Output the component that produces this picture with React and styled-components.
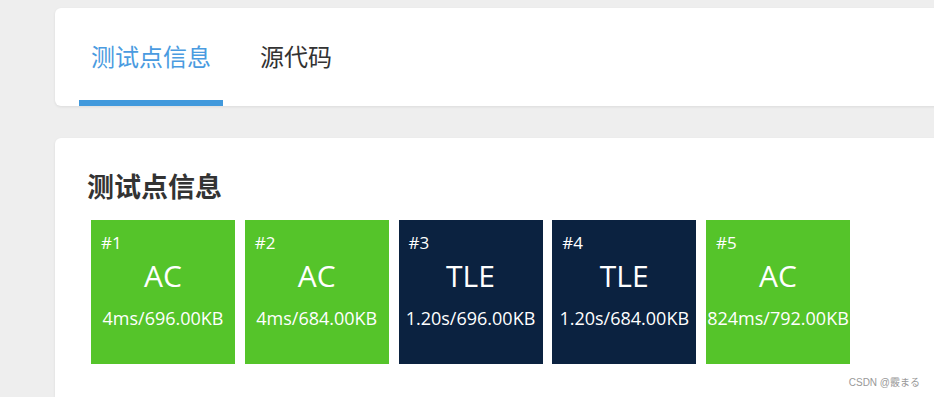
import styled, { createGlobalStyle } from "styled-components";

const GlobalStyle = createGlobalStyle`
  html, body {
    margin: 0;
    padding: 0;
    background: #eeeeee;
    overflow: hidden;
  }
  body {
    font-family: "Open Sans", "Noto Sans CJK SC", sans-serif;
  }
`;

const Page = styled.div`
  width: 934px;
  height: 397px;
  padding: 8px 0 0 55px;
  box-sizing: border-box;
  display: flex;
  flex-direction: column;
  gap: 32px;
  position: relative;
  overflow: hidden;
`;

const Card = styled.div`
  width: 900px;
  flex-shrink: 0;
  background: #ffffff;
  border-radius: 6px 0 0 6px;
  box-shadow: 0 1px 3px rgba(0, 0, 0, 0.08);
`;

const TabBar = styled.div`
  display: flex;
  padding-left: 24px;
  height: 98px;
  gap: 25px;
`;

const Tab = styled.button`
  background: none;
  border: none;
  padding: 0 12px;
  height: 98px;
  box-sizing: border-box;
  font-family: "Noto Sans CJK SC", sans-serif;
  font-size: 24px;
  color: ${(p) => (p.$active ? "#4a9be0" : "#333333")};
  border-bottom: 6px solid ${(p) => (p.$active ? "#4199dc" : "transparent")};
  padding-top: 2px;
  display: flex;
  align-items: center;
`;

const Section = styled(Card)`
  flex: 1;
  border-radius: 6px 0 0 0;
  padding: 30px 0 0 32px;
  box-sizing: border-box;
`;

const Heading = styled.h2`
  margin: 0 0 16px;
  font-family: "Noto Sans CJK SC", sans-serif;
  font-size: 27px;
  font-weight: 700;
  line-height: 36px;
  color: #333333;
`;

const Cases = styled.div`
  display: flex;
  gap: 9.75px;
  padding-left: 4px;
`;

const CaseBox = styled.div`
  width: 144px;
  height: 144px;
  background: ${(p) => (p.$status === "AC" ? "#55c42a" : "#0b2240")};
  color: #ffffff;
  display: flex;
  flex-direction: column;
  align-items: center;
  padding-top: 12px;
  box-sizing: border-box;
`;

const CaseId = styled.div`
  align-self: flex-start;
  padding-left: 10px;
  font-size: 17px;
  line-height: 22px;
`;

const Verdict = styled.div`
  font-size: 30px;
  line-height: 40px;
  margin-top: 2px;
`;

const Usage = styled.div`
  font-size: 18px;
  line-height: 24px;
  margin-top: 10px;
  white-space: nowrap;
`;

const Watermark = styled.div`
  position: absolute;
  right: 14px;
  bottom: 8px;
  font-family: "Liberation Sans", "Noto Sans CJK JP", sans-serif;
  font-size: 10px;
  color: #999999;
`;

const cases = [
  { id: 1, status: "AC", usage: "4ms/696.00KB" },
  { id: 2, status: "AC", usage: "4ms/684.00KB" },
  { id: 3, status: "TLE", usage: "1.20s/696.00KB" },
  { id: 4, status: "TLE", usage: "1.20s/684.00KB" },
  { id: 5, status: "AC", usage: "824ms/792.00KB" },
];

const App = () => {
  return (
    <>
      <GlobalStyle />
      <Page>
        <Card>
          <TabBar>
            <Tab $active>测试点信息</Tab>
            <Tab>源代码</Tab>
          </TabBar>
        </Card>
        <Section>
          <Heading>测试点信息</Heading>
          <Cases>
            {cases.map((c) => (
              <CaseBox key={c.id} $status={c.status}>
                <CaseId>#{c.id}</CaseId>
                <Verdict>{c.status}</Verdict>
                <Usage>{c.usage}</Usage>
              </CaseBox>
            ))}
          </Cases>
        </Section>
        <Watermark>CSDN @霰まる</Watermark>
      </Page>
    </>
  );
};

export default App;
